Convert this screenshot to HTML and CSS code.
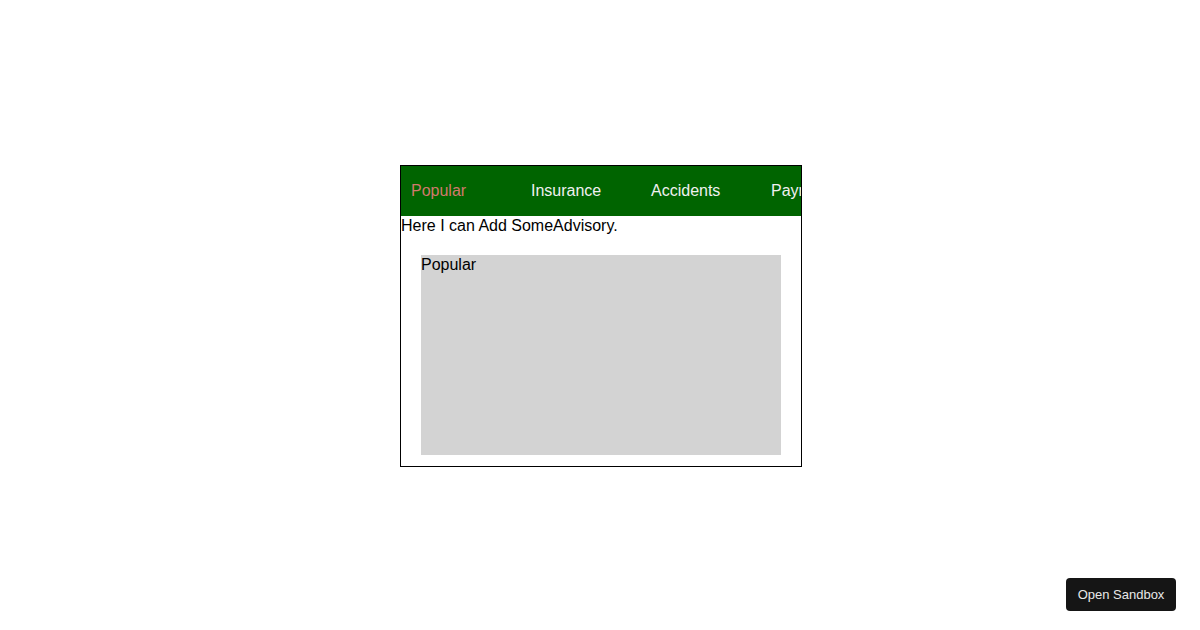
FILE: index.html
```html
<!DOCTYPE html>
<html>
<head>
<meta charset="utf-8">
<link rel="stylesheet" href="styles.css">
</head>
<body>
<div class="stage">
  <div class="widget">
    <nav class="tabs">
      <span class="tab active">Popular</span>
      <span class="tab">Insurance</span>
      <span class="tab">Accidents</span>
      <span class="tab">Payments</span>
    </nav>
    <div class="advisory">Here I can Add SomeAdvisory.</div>
    <div class="panel">Popular</div>
  </div>
</div>
<button class="sandbox">Open Sandbox</button>
</body>
</html>
```
FILE: styles.css
```css
html, body {
  margin: 0;
  padding: 0;
  background: #fff;
}
body {
  font-family: "Liberation Sans", Arial, sans-serif;
  font-size: 16px;
  color: #000;
  width: 1200px;
  height: 630px;
  position: relative;
}
.stage {
  display: flex;
  justify-content: center;
  padding-top: 165px;
  padding-left: 2px;
}
.widget {
  width: 400px;
  height: 300px;
  border: 1px solid #000;
  overflow: hidden;
}
.tabs {
  display: flex;
  flex-wrap: nowrap;
  height: 50px;
  background: #006400;
  overflow: hidden;
}
.tab {
  flex: 0 0 120px;
  box-sizing: border-box;
  padding-left: 10px;
  line-height: 50px;
  color: #f0f0f0;
  white-space: nowrap;
}
.tab.active {
  color: #d07a6c;
}
.advisory {
  line-height: 19px;
}
.panel {
  margin: 20px;
  height: 200px;
  background: #d3d3d3;
  line-height: 19px;
}
.sandbox {
  position: absolute;
  right: 24px;
  bottom: 19px;
  width: 110px;
  height: 33px;
  border: 0;
  border-radius: 4px;
  background: #151515;
  color: #e8e8e8;
  font-family: "Liberation Sans", Arial, sans-serif;
  font-size: 13px;
  padding: 0;
}
```
